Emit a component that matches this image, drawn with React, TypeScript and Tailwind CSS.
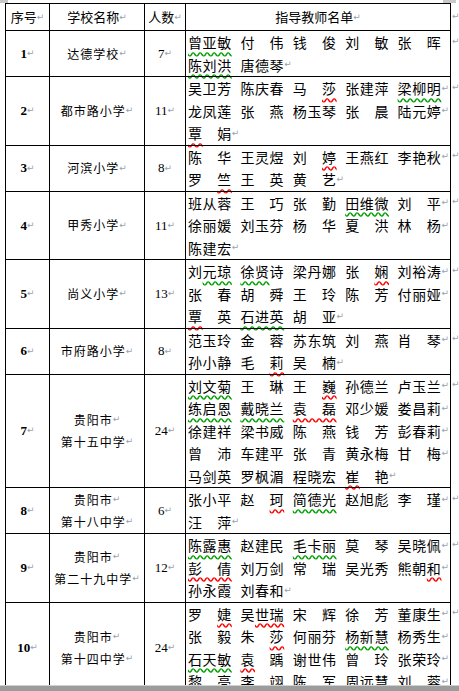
import React from 'react';

type Row = {
  no: string;
  school: string[];
  count: string;
  lines: string[][];
};

// {r:..} red wavy underline, {g:..} green wavy underline (spell-check marks)
const rows: Row[] = [
  {
    no: '1',
    school: ['达德学校'],
    count: '7',
    lines: [
      ['{g:曾亚敏}', '付　伟', '钱　俊', '刘　敏', '张　晖'],
      ['{g:陈刘洪}', '唐德琴'],
    ],
  },
  {
    no: '2',
    school: ['都市路小学'],
    count: '11',
    lines: [
      ['吴卫芳', '陈庆春', '马　{r:莎}', '张建萍', '{g:梁柳明}'],
      ['龙凤莲', '张　燕', '杨玉琴', '张　晨', '陆元婷'],
      ['{r:覃}　娟'],
    ],
  },
  {
    no: '3',
    school: ['河滨小学'],
    count: '8',
    lines: [
      ['陈　华', '王灵煜', '刘　{r:婷}', '王燕红', '李艳秋'],
      ['罗　{r:竺}', '王　英', '黄　艺'],
    ],
  },
  {
    no: '4',
    school: ['甲秀小学'],
    count: '11',
    lines: [
      ['班从蓉', '王　巧', '张　勤', '{g:田维微}', '刘　平'],
      ['徐丽媛', '刘玉芬', '杨　华', '夏　洪', '林　杨'],
      ['陈建宏'],
    ],
  },
  {
    no: '5',
    school: ['尚义小学'],
    count: '13',
    lines: [
      ['刘{g:元琼}', '{g:徐贤}诗', '梁丹娜', '张　{r:娴}', '刘裕涛'],
      ['张　春', '胡　舜', '王　玲', '陈　芳', '付丽娅'],
      ['{r:覃}　英', '{g:石进英}', '胡　亚'],
    ],
  },
  {
    no: '6',
    school: ['市府路小学'],
    count: '8',
    lines: [
      ['范玉玲', '金　蓉', '苏东筑', '刘　燕', '肖　琴'],
      ['孙小静', '毛　{r:莉}', '吴　楠'],
    ],
  },
  {
    no: '7',
    school: ['贵阳市', '第十五中学'],
    count: '24',
    lines: [
      ['{g:刘文菊}', '王　琳', '王　{r:巍}', '孙德兰', '卢玉兰'],
      ['{g:练启恩}', '{g:戴晓兰}', '{r:袁　磊}', '邓少媛', '娄昌莉'],
      ['徐建祥', '梁书威', '陈　燕', '钱　芳', '彭春莉'],
      ['曾　沛', '车建平', '张　青', '黄永梅', '甘　梅'],
      ['马剑英', '罗枫湄', '程晓宏', '{r:崔}　艳'],
    ],
  },
  {
    no: '8',
    school: ['贵阳市', '第十八中学'],
    count: '6',
    lines: [
      ['张小平', '赵　{r:珂}', '{g:简德光}', '赵旭彪', '李　瑾'],
      ['汪　萍'],
    ],
  },
  {
    no: '9',
    school: ['贵阳市', '第二十九中学'],
    count: '12',
    lines: [
      ['{g:陈露惠}', '赵建民', '{g:毛卡丽}', '莫　琴', '吴晓佩'],
      ['{r:彭　倩}', '刘万剑', '常　瑞', '吴光秀', '熊朝{r:和}'],
      ['孙永霞', '刘春和'],
    ],
  },
  {
    no: '10',
    school: ['贵阳市', '第十四中学'],
    count: '24',
    lines: [
      ['罗　{r:婕}', '吴{r:世瑞}', '宋　辉', '徐　芳', '董康生'],
      ['张　毅', '朱　{r:莎}', '何丽芬', '{g:杨新慧}', '杨秀生'],
      ['{g:石天敏}', '{r:袁}　踽', '谢世伟', '曾　玲', '张荣玲'],
      ['黎　亮', '李　翊', '陈　军', '{g:周远慧}', '刘　蓉'],
    ],
  },
];

const Mark = () => (
  <span className="inline-block leading-none text-[9px] tracking-normal text-gray-400 font-['DejaVu_Sans',sans-serif]">↵</span>
);

const Name = ({ text }: { text: string }) => {
  const parts = text.split(/(\{[rg]:[^}]+\})/).filter(Boolean);
  return (
    <>
      {parts.map((p, i) => {
        if (p.startsWith('{r:')) {
          return (
            <span key={i} className="underline decoration-wavy decoration-[#ff0000] underline-offset-[3px]">
              {p.slice(3, -1)}
            </span>
          );
        }
        if (p.startsWith('{g:')) {
          return (
            <span key={i} className="underline decoration-wavy decoration-[#00a000] underline-offset-[3px]">
              {p.slice(3, -1)}
            </span>
          );
        }
        return <span key={i}>{p}</span>;
      })}
    </>
  );
};

const rowGrid = 'grid grid-cols-[44px_95px_41px_266px_8px]';
const cell = 'flex items-center justify-center border-l border-t border-black';

export default function App() {
  return (
    <div className="relative h-[691px] overflow-hidden bg-white pt-[3px] pl-[5px] font-['Noto_Sans_CJK_SC',sans-serif] text-black">
      {/* table move handles */}
      <div className="absolute left-0 top-0 h-[3px] w-[8px] bg-[#c8c8c8]" />
      <div className="absolute left-[443px] top-0 h-[3px] w-[13px] bg-[#c8c8c8]" />

      {/* header */}
      <div className={`${rowGrid} h-[27px] text-[13px]`}>
        <div className={cell}>序号<Mark /></div>
        <div className={cell}>学校名称<Mark /></div>
        <div className={`${cell} overflow-hidden whitespace-nowrap`}>人数<Mark /></div>
        <div className={`${cell} border-r`}>指导教师名单<Mark /></div>
        <div className="flex items-center pl-[1px]"><Mark /></div>
      </div>

      {rows.map((row, ri) => (
        <div key={row.no} className={rowGrid}>
          <div className={cell}>
            <span className="font-['Liberation_Serif',serif] font-bold text-[13px]">{row.no}</span>
            <Mark />
          </div>
          <div className={`${cell} flex-col text-[12px] tracking-[1px]`}>
            {row.school.map((s, i) => (
              <div key={i} className="flex h-[22px] items-center whitespace-nowrap">
                {s}
                <Mark />
              </div>
            ))}
          </div>
          <div className={cell}>
            <span className="font-['Liberation_Serif',serif] text-[13px]">{row.count}</span>
            <Mark />
          </div>
          <div className="border-l border-r border-t border-black pl-[2px] text-[14px] tracking-[0.6px]">
            {row.lines.map((line, li) => (
              <div key={li} className="grid h-[22.5px] grid-cols-5 items-center whitespace-nowrap leading-[20px]">
                {line.map((n, ni) => (
                  <div key={ni} className="flex items-center">
                    <Name text={n} />
                    {ni === line.length - 1 && !(ri === 0 && li === 0) && <Mark />}
                  </div>
                ))}
              </div>
            ))}
          </div>
          <div className="flex h-[22px] items-center pl-[1px]">
            <Mark />
          </div>
        </div>
      ))}

      {/* window status strip */}
      <div className="absolute bottom-0 left-0 h-[6px] w-full border-t border-[#d0d0d0] bg-[#9c9c9c]" />
    </div>
  );
}
